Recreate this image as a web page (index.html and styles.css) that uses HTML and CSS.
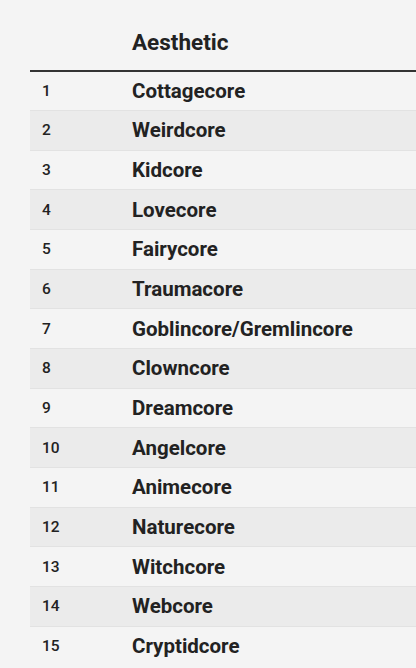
FILE: index.html
```html
<!DOCTYPE html>
<html>
<head>
<meta charset="utf-8">
<link rel="stylesheet" href="styles.css">
</head>
<body>
<div class="wrap">
<table class="tbl">
<thead>
<tr><th class="num"></th><th class="name">Aesthetic</th></tr>
</thead>
<tbody>
<tr><td class="num">1</td><td class="name">Cottagecore</td></tr>
<tr><td class="num">2</td><td class="name">Weirdcore</td></tr>
<tr><td class="num">3</td><td class="name">Kidcore</td></tr>
<tr><td class="num">4</td><td class="name">Lovecore</td></tr>
<tr><td class="num">5</td><td class="name">Fairycore</td></tr>
<tr><td class="num">6</td><td class="name">Traumacore</td></tr>
<tr><td class="num">7</td><td class="name">Goblincore/Gremlincore</td></tr>
<tr><td class="num">8</td><td class="name">Clowncore</td></tr>
<tr><td class="num">9</td><td class="name">Dreamcore</td></tr>
<tr><td class="num">10</td><td class="name">Angelcore</td></tr>
<tr><td class="num">11</td><td class="name">Animecore</td></tr>
<tr><td class="num">12</td><td class="name">Naturecore</td></tr>
<tr><td class="num">13</td><td class="name">Witchcore</td></tr>
<tr><td class="num">14</td><td class="name">Webcore</td></tr>
<tr><td class="num">15</td><td class="name">Cryptidcore</td></tr>
</tbody>
</table>
</div>
</body>
</html>
```
FILE: styles.css
```css
html, body {
  margin: 0;
  padding: 0;
  background: #f4f4f4;
  overflow: hidden;
}
.wrap {
  padding-left: 30px;
}
.tbl {
  width: 400px;
  border-collapse: collapse;
  font-family: Roboto, "Liberation Sans", sans-serif;
  color: #222;
}
.tbl th {
  height: 71px;
  box-sizing: border-box;
  padding: 0;
  text-align: left;
  font-size: 22.5px;
  font-weight: 700;
  vertical-align: middle;
  padding-top: 14px;
  border-bottom: 2px solid #333;
}
.tbl td {
  height: 39.67px;
  box-sizing: border-box;
  padding: 0;
  border-top: 1px solid #e2e2e2;
  vertical-align: middle;
}
.tbl tbody tr:first-child td {
  border-top: none;
}
.tbl tbody tr:nth-child(even) td {
  background: #ebebeb;
}
.tbl .num {
  width: 102px;
  padding-left: 12px;
  font-size: 15.5px;
  font-weight: 500;
}
.tbl td.name {
  font-size: 20.5px;
  font-weight: 700;
}
```
